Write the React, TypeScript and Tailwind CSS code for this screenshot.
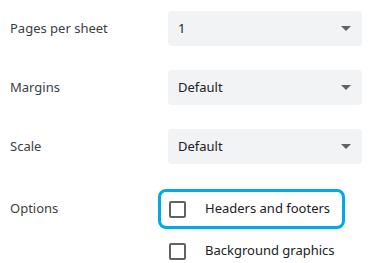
import React from "react";

function Select({ value }: { value: string }) {
  return (
    <div className="flex h-[35px] w-[194px] items-center justify-between rounded-[4px] bg-[#f1f3f4] pl-[10px] pr-[11px] text-[13px] text-[#202124]">
      <span>{value}</span>
      <svg width="10" height="5" viewBox="0 0 10 5">
        <path d="M0 0 L10 0 L5 5 Z" fill="#5f6368" />
      </svg>
    </div>
  );
}

function Checkbox() {
  return <div className="h-[17px] w-[17px] shrink-0 rounded-[2px] border-2 border-[#5f6368]" />;
}

export default function App() {
  return (
    <div
      className="h-[263px] w-[371px] bg-white text-[13px] text-[#202124]"
      style={{ fontFamily: '"Noto Sans", "Open Sans", sans-serif' }}
    >
      <div className="flex flex-col pt-[11px]">
        {[
          ["Pages per sheet", "1"],
          ["Margins", "Default"],
          ["Scale", "Default"],
        ].map(([label, value]) => (
          <div key={label} className="mb-[24px] flex items-center">
            <div className="w-[168px] pl-[10px] text-[#3c4043]">{label}</div>
            <Select value={value} />
          </div>
        ))}
        <div className="mt-[1px] flex">
          <div className="flex h-[40px] w-[158px] items-center pl-[10px] text-[#3c4043]">Options</div>
          <div className="flex flex-col">
            <div className="flex h-[40px] w-[187px] items-center rounded-[8px] border-[3px] border-[#00aae8] pl-[8px]">
              <Checkbox />
              <span className="ml-[19px]">Headers and footers</span>
            </div>
            <div className="mt-[2px] flex h-[40px] items-center pl-[11px]">
              <Checkbox />
              <span className="ml-[19px]">Background graphics</span>
            </div>
          </div>
        </div>
      </div>
    </div>
  );
}
